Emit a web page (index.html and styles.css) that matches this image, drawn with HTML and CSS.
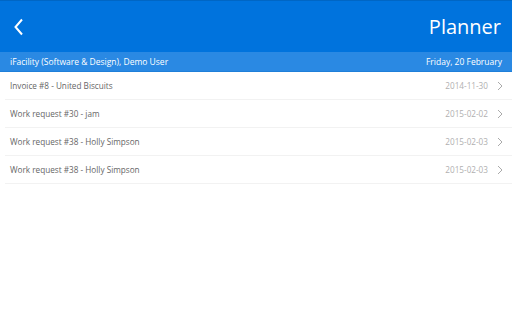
FILE: index.html
```html
<!DOCTYPE html>
<html lang="en">
<head>
    <meta charset="UTF-8">
    <title>Planner</title>
    <link rel="stylesheet" href="styles.css">
</head>
<body>
    <div class="header">
        <div class="back">
            <svg width="12" height="18" viewBox="0 0 12 18"><path d="M9 1.5 L2.5 9 L9 16.5" fill="none" stroke="#fff" stroke-width="2"/></svg>
        </div>
        <h1>Planner</h1>
    </div>
    <div class="subheader">
        <span>iFacility (Software &amp; Design), Demo User</span>
        <span>Friday, 20 February</span>
    </div>

    <div class="list">
        <div class="item">
            <span class="name">Invoice #8 - United Biscuits</span>
            <span class="date">2014-11-30</span>
            <svg class="chev" width="6" height="10" viewBox="0 0 6 10"><path d="M1 1 L5 5 L1 9" fill="none" stroke="#aaa" stroke-width="1"/></svg>
        </div>
        <div class="item">
            <span class="name">Work request #30 - jam</span>
            <span class="date">2015-02-02</span>
            <svg class="chev" width="6" height="10" viewBox="0 0 6 10"><path d="M1 1 L5 5 L1 9" fill="none" stroke="#aaa" stroke-width="1"/></svg>
        </div>
        <div class="item">
            <span class="name">Work request #38 - Holly Simpson</span>
            <span class="date">2015-02-03</span>
            <svg class="chev" width="6" height="10" viewBox="0 0 6 10"><path d="M1 1 L5 5 L1 9" fill="none" stroke="#aaa" stroke-width="1"/></svg>
        </div>
        <div class="item">
            <span class="name">Work request #38 - Holly Simpson</span>
            <span class="date">2015-02-03</span>
            <svg class="chev" width="6" height="10" viewBox="0 0 6 10"><path d="M1 1 L5 5 L1 9" fill="none" stroke="#aaa" stroke-width="1"/></svg>
        </div>
    </div>
</body>
</html>
```

FILE: styles.css
```css
body {
    margin: 0;
    font-family: "Open Sans", sans-serif;
    background: #fff;
}
.header {
    height: 52px;
    background-color: #0073dd;
    border-top: 1px solid #0066c4;
    box-sizing: border-box;
    display: flex;
    align-items: center;
    justify-content: space-between;
    padding: 0 11px 0 13px;
    color: #fff;
}
.back {
    display: flex;
    padding-top: 1px;
}
h1 {
    margin: 0;
    font-size: 20px;
    font-weight: normal;
}
.subheader {
    height: 20px;
    background-color: #2a89e3;
    border-bottom: 1px solid #1f7fd9;
    box-sizing: border-box;
    display: flex;
    align-items: center;
    justify-content: space-between;
    padding: 0 10px;
    color: #fff;
    font-size: 8.5px;
}
.list {
    padding-left: 5px;
}
.item {
    height: 28px;
    box-sizing: border-box;
    border-bottom: 1px solid #f2f2f2;
    display: flex;
    align-items: center;
    padding: 0 9px 0 5px;
    font-size: 8.2px;
    color: #666;
}
.name {
    flex: 1;
}
.date {
    color: #b0b0b0;
}
.chev {
    margin-left: 9px;
}
```
